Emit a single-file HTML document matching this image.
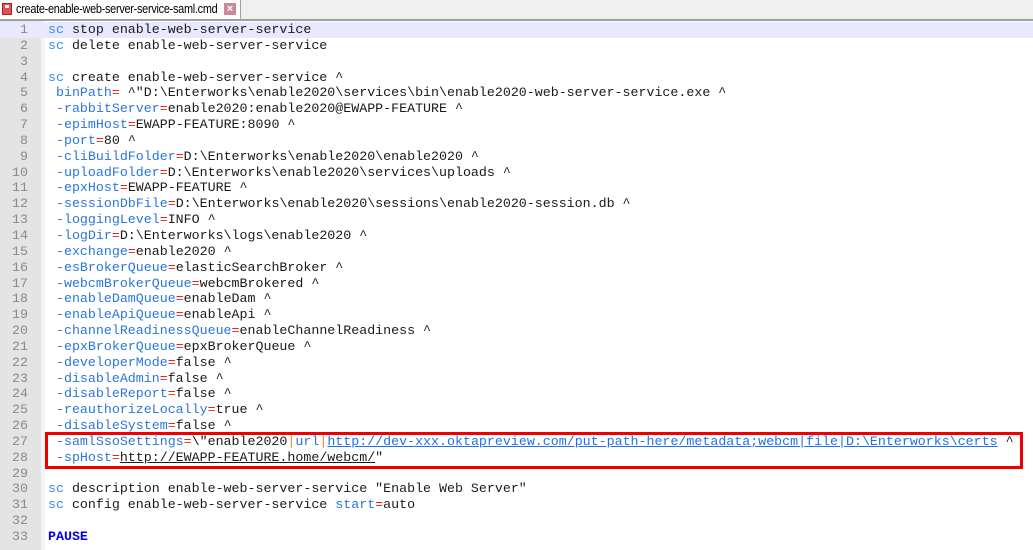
<!DOCTYPE html>
<html><head><meta charset="utf-8"><style>
html,body{margin:0;padding:0;width:1033px;height:550px;overflow:hidden;background:#fff;}
#tabbar{position:absolute;left:0;top:0;width:1033px;height:19px;background:#f0f0f0;border-bottom:2px solid #a0a0a0;}
#tab{position:absolute;left:0;top:0;height:19px;width:240px;background:#fff;border-right:1px solid #a0a0a0;font:12.5px "Liberation Sans",sans-serif;color:#000;}
#tab .ic{position:absolute;left:2px;top:3px;width:10px;height:12px;background:#e05050;border:1px solid #b02020;box-sizing:border-box;}
#tab .ic:after{content:"";position:absolute;left:2px;top:1px;width:4px;height:3px;background:#fff;}
#tab .t{position:absolute;left:16px;top:2px;white-space:nowrap;transform:scaleX(0.87);transform-origin:left;letter-spacing:-0.3px;}
#tab .x{position:absolute;left:224px;top:3px;width:12px;height:12px;background:#c88a9a;color:#fff;font:bold 11px "Liberation Sans",sans-serif;text-align:center;line-height:12px;}
#gutter{position:absolute;left:0;top:21px;width:41px;height:529px;background:#e4e4e4;}
#fold{position:absolute;left:41px;top:21px;width:4px;height:529px;background:#f4f4f4;}
#code{position:absolute;left:0;top:22px;width:1033px;font:13.3px "Liberation Mono",monospace;}
.l{height:15.85px;line-height:15.85px;white-space:pre;position:relative;}
.l .n{position:absolute;left:0;width:28px;text-align:right;color:#8a8a8a;}
.l .c{position:absolute;left:48px;color:#1a1a1a;}
.hl{background:#e8e8ff;}
.k{color:#3b8bf0}.p{color:#2b75e0}.e{color:#f02020}.u{color:#2070f0;text-decoration:underline}.ud{text-decoration:underline}.b{color:#0000ee;font-weight:bold}.o{color:#f08030}
#box{position:absolute;left:45px;top:432px;width:978px;height:37px;border:3px solid #ee0000;box-sizing:border-box;}
</style></head><body>
<div id="tabbar"><div id="tab"><div class="ic"></div><span class="t">create-enable-web-server-service-saml.cmd</span><div class="x">×</div></div></div>
<div id="gutter"></div><div id="fold"></div>
<div id="code">
<div class="l hl"><span class="n">1</span><span class="c" style="width:985px"><span class="k">sc</span> stop enable-web-server-service</span></div>
<div class="l"><span class="n">2</span><span class="c"><span class="k">sc</span> delete enable-web-server-service</span></div>
<div class="l"><span class="n">3</span><span class="c"></span></div>
<div class="l"><span class="n">4</span><span class="c"><span class="k">sc</span> create enable-web-server-service ^</span></div>
<div class="l"><span class="n">5</span><span class="c"> <span class="p">binPath</span><span class="e">=</span> ^"D:\Enterworks\enable2020\services\bin\enable2020-web-server-service.exe ^</span></div>
<div class="l"><span class="n">6</span><span class="c"> <span class="p">-rabbitServer</span><span class="e">=</span>enable2020:enable2020@EWAPP-FEATURE ^</span></div>
<div class="l"><span class="n">7</span><span class="c"> <span class="p">-epimHost</span><span class="e">=</span>EWAPP-FEATURE:8090 ^</span></div>
<div class="l"><span class="n">8</span><span class="c"> <span class="p">-port</span><span class="e">=</span>80 ^</span></div>
<div class="l"><span class="n">9</span><span class="c"> <span class="p">-cliBuildFolder</span><span class="e">=</span>D:\Enterworks\enable2020\enable2020 ^</span></div>
<div class="l"><span class="n">10</span><span class="c"> <span class="p">-uploadFolder</span><span class="e">=</span>D:\Enterworks\enable2020\services\uploads ^</span></div>
<div class="l"><span class="n">11</span><span class="c"> <span class="p">-epxHost</span><span class="e">=</span>EWAPP-FEATURE ^</span></div>
<div class="l"><span class="n">12</span><span class="c"> <span class="p">-sessionDbFile</span><span class="e">=</span>D:\Enterworks\enable2020\sessions\enable2020-session.db ^</span></div>
<div class="l"><span class="n">13</span><span class="c"> <span class="p">-loggingLevel</span><span class="e">=</span>INFO ^</span></div>
<div class="l"><span class="n">14</span><span class="c"> <span class="p">-logDir</span><span class="e">=</span>D:\Enterworks\logs\enable2020 ^</span></div>
<div class="l"><span class="n">15</span><span class="c"> <span class="p">-exchange</span><span class="e">=</span>enable2020 ^</span></div>
<div class="l"><span class="n">16</span><span class="c"> <span class="p">-esBrokerQueue</span><span class="e">=</span>elasticSearchBroker ^</span></div>
<div class="l"><span class="n">17</span><span class="c"> <span class="p">-webcmBrokerQueue</span><span class="e">=</span>webcmBrokered ^</span></div>
<div class="l"><span class="n">18</span><span class="c"> <span class="p">-enableDamQueue</span><span class="e">=</span>enableDam ^</span></div>
<div class="l"><span class="n">19</span><span class="c"> <span class="p">-enableApiQueue</span><span class="e">=</span>enableApi ^</span></div>
<div class="l"><span class="n">20</span><span class="c"> <span class="p">-channelReadinessQueue</span><span class="e">=</span>enableChannelReadiness ^</span></div>
<div class="l"><span class="n">21</span><span class="c"> <span class="p">-epxBrokerQueue</span><span class="e">=</span>epxBrokerQueue ^</span></div>
<div class="l"><span class="n">22</span><span class="c"> <span class="p">-developerMode</span><span class="e">=</span>false ^</span></div>
<div class="l"><span class="n">23</span><span class="c"> <span class="p">-disableAdmin</span><span class="e">=</span>false ^</span></div>
<div class="l"><span class="n">24</span><span class="c"> <span class="p">-disableReport</span><span class="e">=</span>false ^</span></div>
<div class="l"><span class="n">25</span><span class="c"> <span class="p">-reauthorizeLocally</span><span class="e">=</span>true ^</span></div>
<div class="l"><span class="n">26</span><span class="c"> <span class="p">-disableSystem</span><span class="e">=</span>false ^</span></div>
<div class="l"><span class="n">27</span><span class="c"> <span class="p">-samlSsoSettings</span><span class="e">=</span>\"enable2020<span class="o">|</span><span class="p">url</span><span class="o">|</span><span class="u">http://dev-xxx.oktapreview.com/put-path-here/metadata;webcm|file|D:\Enterworks\certs</span> ^</span></div>
<div class="l"><span class="n">28</span><span class="c"> <span class="p">-spHost</span><span class="e">=</span><span class="ud">http://EWAPP-FEATURE.home/webcm/</span>"</span></div>
<div class="l"><span class="n">29</span><span class="c"></span></div>
<div class="l"><span class="n">30</span><span class="c"><span class="k">sc</span> description enable-web-server-service "Enable Web Server"</span></div>
<div class="l"><span class="n">31</span><span class="c"><span class="k">sc</span> config enable-web-server-service <span class="p">start</span><span class="e">=</span>auto</span></div>
<div class="l"><span class="n">32</span><span class="c"></span></div>
<div class="l"><span class="n">33</span><span class="c"><span class="b">PAUSE</span></span></div>
</div>
<div id="box"></div>
</body></html>
